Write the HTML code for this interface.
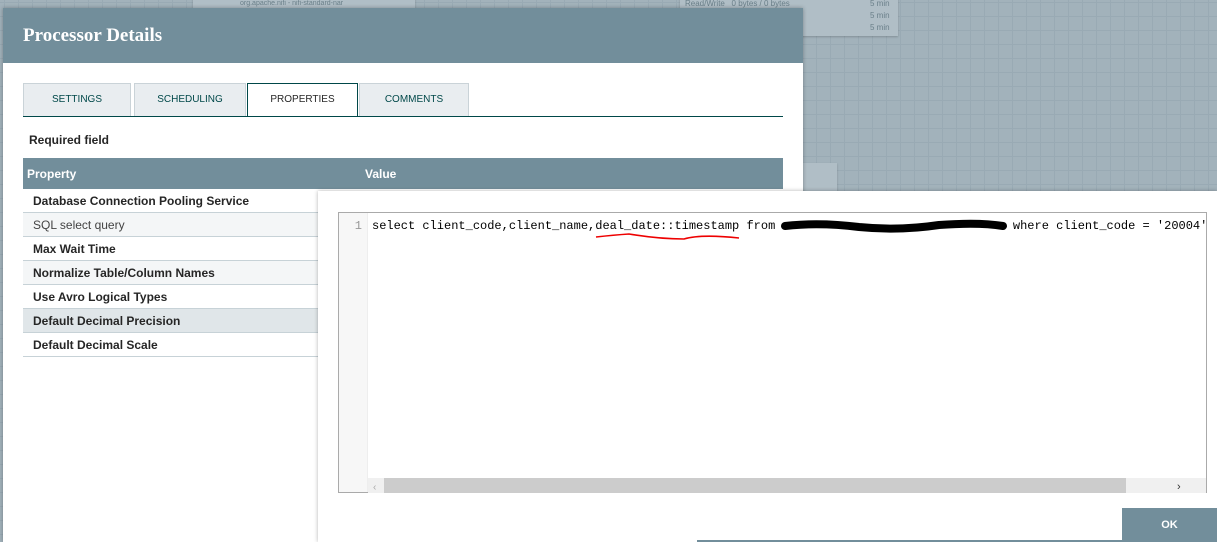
<!DOCTYPE html>
<html><head><style>
*{box-sizing:border-box;margin:0;padding:0}
body{width:1217px;height:542px;overflow:hidden;position:relative;font-family:"Liberation Sans",sans-serif;
background-color:#a2b2bb;background-image:linear-gradient(#99aab4 1px,transparent 1px),linear-gradient(90deg,#99aab4 1px,transparent 1px);background-size:14px 14px;background-position:4px 2px}
.abs{position:absolute}
.card{background:#b0bec6;box-shadow:0 1px 2px rgba(0,0,0,.2)}
.dlg{left:3px;top:8px;width:800px;height:534px;background:#fff;box-shadow:0 0 4px rgba(0,0,0,.3)}
.hdr{left:0;top:0;width:800px;height:55px;background:#728e9b;color:#fff;font-family:"Liberation Serif",serif;font-weight:bold;font-size:19px;padding:17px 0 0 20px}
.tab{top:75px;height:33px;background:#e9edf0;border:1px solid #cad3d8;border-bottom:none;font-size:10px;color:#004849;text-align:center;line-height:32px}
.tab.act{background:#fff;border:1px solid #004849;border-bottom:none;color:#262626;height:34px}
.row{left:20px;width:760px;height:24px;border-bottom:1px solid #c7d2d7;font-size:12px;font-weight:bold;color:#262626;padding:5px 0 0 10px}
.pop{left:318px;top:191px;width:899px;height:351px;background:#fff;box-shadow:0 0 4px rgba(0,0,0,.3)}
.ed{left:20px;top:21px;width:869px;height:281px;border:1px solid #aaa;background:#fff}
.gut{left:0;top:0;width:29px;height:279px;background:#f7f7f7;border-right:1px solid #eee;font:12px "Liberation Mono",monospace;color:#999;text-align:right;padding:6px 5px 0 0}
.code{left:33px;top:6px;font:12px "Liberation Mono",monospace;color:#000;white-space:pre}
</style></head><body>
<div class="abs card" style="left:193px;top:-10px;width:222px;height:18px"></div>
<div class="abs" style="left:240px;top:0;font-size:7px;color:#6a7f89">org.apache.nifi - nifi-standard-nar</div>
<div class="abs card" style="left:680px;top:-5px;width:218px;height:41px"></div>
<div class="abs" style="left:685px;top:-1px;font-size:8px;color:#6a7f89">Read/Write &nbsp; 0 bytes / 0 bytes</div>
<div class="abs" style="left:870px;top:-1px;font-size:8px;color:#6a7f89">5 min</div>
<div class="abs" style="left:870px;top:11px;font-size:8px;color:#6a7f89">5 min</div>
<div class="abs" style="left:870px;top:23px;font-size:8px;color:#6a7f89">5 min</div>
<div class="abs card" style="left:790px;top:163px;width:47px;height:28px"></div>
<div class="abs dlg">
 <div class="abs hdr">Processor Details</div>
 <div class="abs tab" style="left:20px;width:108px">SETTINGS</div>
 <div class="abs tab" style="left:131px;width:112px">SCHEDULING</div>
 <div class="abs tab act" style="left:244px;width:111px">PROPERTIES</div>
 <div class="abs tab" style="left:356px;width:110px">COMMENTS</div>
 <div class="abs" style="left:20px;top:108px;width:760px;height:1px;background:#004849"></div>
 <div class="abs" style="left:26px;top:125px;font-size:12px;font-weight:bold;color:#262626">Required field</div>
 <div class="abs" style="left:20px;top:150px;width:760px;height:31px;background:#728e9b;color:#fff;font-size:12px;font-weight:bold">
  <span class="abs" style="left:4px;top:9px">Property</span><span class="abs" style="left:342px;top:9px">Value</span></div>
 <div class="abs row" style="top:181px">Database Connection Pooling Service</div>
 <div class="abs row" style="top:205px;font-weight:normal;color:#444;background:#f4f6f7">SQL select query</div>
 <div class="abs row" style="top:229px">Max Wait Time</div>
 <div class="abs row" style="top:253px;background:#f4f6f7">Normalize Table/Column Names</div>
 <div class="abs row" style="top:277px">Use Avro Logical Types</div>
 <div class="abs row" style="top:301px;background:#e0e6e9">Default Decimal Precision</div>
 <div class="abs row" style="top:325px">Default Decimal Scale</div>
</div>
<div class="abs pop">
 <div class="abs ed">
  <div class="abs gut">1</div>
  <div class="abs code">select client_code,client_name,deal_date::timestamp from                                 where client_code = '20004'</div>
  <svg class="abs" style="left:0;top:0" width="869" height="281">
   <path d="M257 24 Q275 22 290 21 Q320 26 345 26 Q362 21 400 25" stroke="#e00" stroke-width="1.6" fill="none"/>
   <path d="M446 13 Q480 9 520 14 Q560 18 600 12 Q640 9 664 13" stroke="#000" stroke-width="8" fill="none" stroke-linecap="round"/>
   <rect x="29" y="265" width="838" height="15" fill="#f0f0f0"/>
   <rect x="45" y="265" width="742" height="15" fill="#ccc"/>
   <text x="34" y="277" font-size="10" fill="#aaa">‹</text>
   <text x="838" y="277" font-size="11" fill="#333">›</text>
  </svg>
 </div>
 <div class="abs" style="left:804px;top:317px;width:95px;height:34px;background:#728e9b;color:#fff;font-size:11px;font-weight:bold;text-align:center;line-height:34px">OK</div>
</div>
<div class="abs" style="left:697px;top:540px;width:425px;height:2px;background:#728e9b"></div>
</body></html>
